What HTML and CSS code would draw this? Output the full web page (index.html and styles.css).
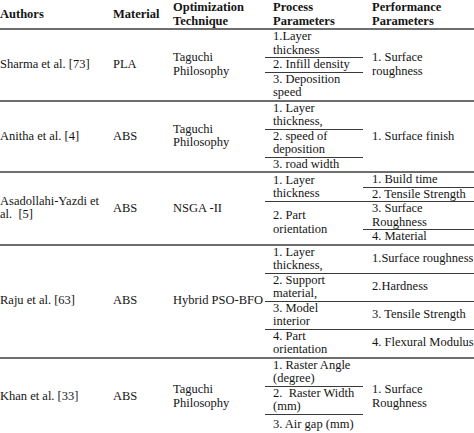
FILE: index.html
```html
<!DOCTYPE html>
<html>
<head>
<meta charset="utf-8">
<link rel="stylesheet" href="styles.css">
</head>
<body>
<table class="t">
  <colgroup>
    <col class="c-auth"><col class="c-mat"><col class="c-tech"><col class="c-proc"><col class="c-perf">
  </colgroup>
  <thead>
    <tr>
      <th class="auth">Authors</th>
      <th>Material</th>
      <th>Optimization<br>Technique</th>
      <th>Process<br>Parameters</th>
      <th class="perf">Performance<br>Parameters</th>
    </tr>
  </thead>
  <tbody>
    <tr>
      <td rowspan="3" class="auth">Sharma et al. [73]</td>
      <td rowspan="3">PLA</td>
      <td rowspan="3">Taguchi<br>Philosophy</td>
      <td class="sub">1.Layer<br>thickness</td>
      <td rowspan="3" class="perf">1. Surface<br>roughness</td>
    </tr>
    <tr><td class="sub">2. Infill density</td></tr>
    <tr><td>3. Deposition<br>speed</td></tr>
  </tbody>
  <tbody>
    <tr>
      <td rowspan="3" class="auth">Anitha et al. [4]</td>
      <td rowspan="3">ABS</td>
      <td rowspan="3">Taguchi<br>Philosophy</td>
      <td class="sub">1. Layer<br>thickness,</td>
      <td rowspan="3" class="perf">1. Surface finish</td>
    </tr>
    <tr><td class="sub">2. speed of<br>deposition</td></tr>
    <tr><td>3. road width</td></tr>
  </tbody>
  <tbody>
    <tr>
      <td rowspan="4" class="auth">Asadollahi-Yazdi et<br>al.&nbsp; [5]</td>
      <td rowspan="4">ABS</td>
      <td rowspan="4">NSGA -II</td>
      <td rowspan="2" class="sub">1. Layer<br>thickness</td>
      <td class="perf sub">1. Build time</td>
    </tr>
    <tr><td class="perf sub">2. Tensile Strength</td></tr>
    <tr>
      <td rowspan="2">2. Part<br>orientation</td>
      <td class="perf sub">3. Surface<br>Roughness</td>
    </tr>
    <tr><td class="perf">4. Material</td></tr>
  </tbody>
  <tbody>
    <tr>
      <td rowspan="4" class="auth">Raju et al. [63]</td>
      <td rowspan="4">ABS</td>
      <td rowspan="4">Hybrid PSO-BFO</td>
      <td class="sub">1. Layer<br>thickness,</td>
      <td class="perf sub">1.Surface roughness</td>
    </tr>
    <tr>
      <td class="sub">2. Support<br>material,</td>
      <td class="perf sub">2.Hardness</td>
    </tr>
    <tr>
      <td class="sub">3. Model<br>interior</td>
      <td class="perf sub">3. Tensile Strength</td>
    </tr>
    <tr>
      <td>4. Part<br>orientation</td>
      <td class="perf">4. Flexural Modulus</td>
    </tr>
  </tbody>
  <tbody>
    <tr>
      <td rowspan="3" class="auth">Khan et al. [33]</td>
      <td rowspan="3">ABS</td>
      <td rowspan="3">Taguchi<br>Philosophy</td>
      <td class="sub">1. Raster Angle<br>(degree)</td>
      <td rowspan="3" class="perf">1. Surface<br>Roughness</td>
    </tr>
    <tr><td class="sub">2.&nbsp; Raster Width<br>(mm)</td></tr>
    <tr><td class="last">3. Air gap (mm)</td></tr>
  </tbody>
</table>
</body>
</html>
```

FILE: styles.css
```css
html, body {
  margin: 0;
  padding: 0;
  background: #ffffff;
  overflow: hidden;
}

.t {
  width: 474px;
  table-layout: fixed;
  border-collapse: collapse;
  font-family: "Liberation Serif", "Times New Roman", serif;
  font-size: 12.5px;
  line-height: 13.5px;
  color: #141414;
}

.c-auth { width: 105px; }
.c-mat { width: 60px; }
.c-tech { width: 100px; }
.c-proc { width: 98px; }
.c-perf { width: 111px; }

.t th,
.t td {
  padding: 0 0 0 8px;
  text-align: left;
  vertical-align: middle;
  white-space: nowrap;
  overflow: visible;
}

.t th {
  font-weight: bold;
  height: 28px;
  line-height: 14px;
  border-bottom: 2px solid #6e6e6e;
}

.t .auth {
  padding-left: 0;
}

.t .perf {
  padding-left: 9px;
}

.t tbody + tbody tr:first-child td {
  border-top: 2px solid #6e6e6e;
}

.t td.sub {
  border-bottom: 1px solid #3a3a3a;
}

.t td.last {
  height: 17px;
  vertical-align: top;
  padding-top: 3px;
}
```
